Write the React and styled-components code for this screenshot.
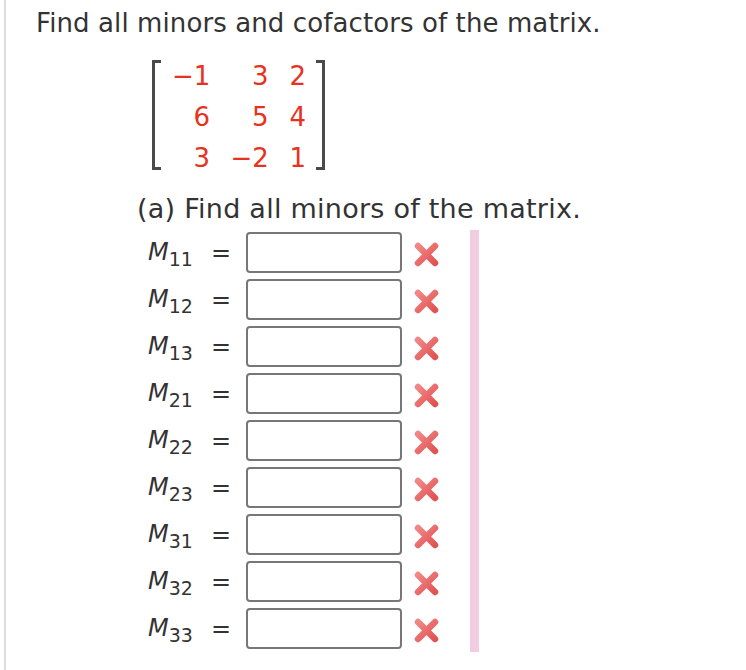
import React from "react";
import styled, { createGlobalStyle } from "styled-components";

const Global = createGlobalStyle`
  html, body { margin: 0; padding: 0; background: #fff; }
  body { font-family: "DejaVu Sans", Verdana, sans-serif; color: #333; }
`;

const Page = styled.div`
  margin-left: 4px;
  border-left: 2px solid #dcdcdc;
  min-height: 670px;
  padding-left: 30px;
  padding-top: 9px;
  box-sizing: border-box;
`;

const Title = styled.div`
  font-size: 26px;
  line-height: 28px;
  letter-spacing: 0.1px;
  color: #333;
`;

const MatrixWrap = styled.div`
  display: flex;
  align-items: flex-start;
  margin: 19px 0 0 116px;
`;

const Bracket = styled.div`
  width: 9px;
  height: 110px;
  margin-top: 4px;
  box-sizing: border-box;
  border: 3px solid #4a4a4a;
  ${(p) => (p.$side === "left" ? "border-right: none;" : "border-left: none;")}
`;

const Grid = styled.div`
  display: grid;
  grid-template-columns: 38px 38px 17px;
  column-gap: 20.5px;
  padding: 0 10px 0 11px;
  font-size: 26px;
  line-height: 41px;
  color: #e8321e;
`;

const Cell = styled.span`
  text-align: right;
  white-space: nowrap;
`;

const Subtitle = styled.div`
  font-size: 27px;
  line-height: 28px;
  letter-spacing: 0.25px;
  margin: 16px 0 0 101px;
  color: #333;
`;

const Body = styled.div`
  display: flex;
  align-items: flex-start;
  margin: 7px 0 0 112px;
`;

const Rows = styled.div`
  display: flex;
  flex-direction: column;
  gap: 6px;
  padding-top: 2px;
`;

const Row = styled.div`
  display: flex;
  align-items: center;
  height: 41px;
`;

const Label = styled.div`
  width: 63px;
  font-size: 24px;
  line-height: 41px;
  color: #333;
  white-space: nowrap;
`;

const MVar = styled.span`
  font-style: italic;
`;

const Sub = styled.sub`
  font-size: 19px;
  vertical-align: -6px;
  line-height: 0;
`;

const Eq = styled.span`
  font-size: 24px;
  width: 35px;
  color: #333;
`;

const Box = styled.input`
  width: 156px;
  height: 41px;
  box-sizing: border-box;
  border: 2px solid #777;
  border-radius: 4px;
  background: #fff;
  margin: 0;
  padding: 0 6px;
  font-size: 18px;
  outline: none;
`;

const Mark = styled.svg`
  width: 27px;
  height: 27px;
  margin-left: 11px;
  margin-top: 4px;
`;

const PinkBar = styled.div`
  width: 9px;
  height: 422px;
  background: #f2cce0;
  margin-left: 30px;
`;

const Cross = () => (
  <Mark viewBox="0 0 27 27">
    <defs>
      <linearGradient id="xg" x1="0" y1="0" x2="1" y2="1">
        <stop offset="0" stopColor="#f28080" />
        <stop offset="1" stopColor="#e04a4a" />
      </linearGradient>
    </defs>
    <g stroke="url(#xg)" strokeWidth="6.5" strokeLinecap="round" opacity="0.95">
      <line x1="5" y1="5" x2="22" y2="22" />
      <line x1="22" y1="5" x2="5" y2="22" />
    </g>
  </Mark>
);

const matrix = [
  ["−1", "3", "2"],
  ["6", "5", "4"],
  ["3", "−2", "1"],
];

const minors = ["11", "12", "13", "21", "22", "23", "31", "32", "33"];

export default function App() {
  return (
    <>
      <Global />
      <Page>
        <Title>Find all minors and cofactors of the matrix.</Title>
        <MatrixWrap>
          <Bracket $side="left" />
          <Grid>
            {matrix.flat().map((v, i) => (
              <Cell key={i}>{v}</Cell>
            ))}
          </Grid>
          <Bracket $side="right" />
        </MatrixWrap>
        <Subtitle>(a) Find all minors of the matrix.</Subtitle>
        <Body>
          <Rows>
            {minors.map((m) => (
              <Row key={m}>
                <Label>
                  <MVar>M</MVar>
                  <Sub>{m}</Sub>
                </Label>
                <Eq>=</Eq>
                <Box type="text" aria-label={`M${m}`} />
                <Cross />
              </Row>
            ))}
          </Rows>
          <PinkBar />
        </Body>
      </Page>
    </>
  );
}
